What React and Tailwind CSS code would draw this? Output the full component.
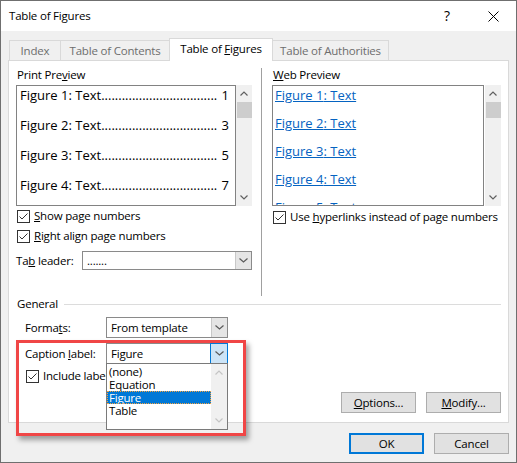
import React from 'react';

// flechita de los combos y scrollbars
function Chevron({ up, color = '#606060', w = 8, h = 5 }) {
  return (
    <svg width={w} height={h} viewBox={`0 0 ${w} ${h}`}>
      <path
        d={up ? `M0.5 ${h - 0.5} L${w / 2} 1 L${w - 0.5} ${h - 0.5}` : `M0.5 0.5 L${w / 2} ${h - 1} L${w - 0.5} 0.5`}
        fill="none"
        stroke={color}
        strokeWidth="1.2"
      />
    </svg>
  );
}

function Check({ children }) {
  return (
    <div className="flex items-center h-[16px]">
      <svg width="13" height="13" viewBox="0 0 13 13" className="shrink-0">
        <rect x="0.5" y="0.5" width="12" height="12" fill="#fff" stroke="#333" />
        <path d="M2.5 6.5 L5 9 L10.5 3.5" fill="none" stroke="#333" strokeWidth="1" />
      </svg>
      <span className="ml-[4px] leading-[16px] whitespace-nowrap">{children}</span>
    </div>
  );
}

function ScrollBar({ disabled }) {
  const c = disabled ? '#c4c4c4' : '#606060';
  return (
    <div className="w-[16px] h-full bg-[#f0f0f0] flex flex-col shrink-0">
      <div className="h-[17px] flex items-center justify-center">
        <Chevron up color={c} />
      </div>
      {!disabled && <div className="h-[16px] ml-[1px] bg-[#cdcdcd]" />}
      <div className="flex-1" />
      <div className="h-[17px] flex items-center justify-center">
        <Chevron color={c} />
      </div>
    </div>
  );
}

function Combo({ value, className, focused, children }) {
  return (
    <div className={`relative flex bg-white border border-[#8a8a8a] ${className}`}>
      <div className="flex-1 flex items-center pl-[4px] leading-none whitespace-nowrap">{value}</div>
      <div
        className={`w-[16px] flex items-center justify-center ${
          focused ? 'bg-[#cce4f7] outline outline-[#0078d7] -outline-offset-0' : 'bg-[#e5e5e5] border-l border-[#c8c8c8]'
        }`}
      >
        <Chevron w={9} h={5} color="#5a5a5a" />
      </div>
      {children}
    </div>
  );
}

function Button({ children, primary }) {
  return (
    <div
      className={`w-[75px] h-[21px] flex items-center justify-center bg-[#e1e1e1] ${
        primary ? 'border-2 border-[#0078d7]' : 'border border-[#adadad]'
      }`}
    >
      {children}
    </div>
  );
}

const printLines = ['1', '3', '5', '7'];
const dots = '.'.repeat(34);

export default function App() {
  return (
    <div className="w-[517px] h-[463px] relative border border-[#6f6f6f] bg-[#f0f0f0] flex flex-col text-black font-['Open_Sans',sans-serif] text-[11.5px] tracking-[-0.2px]">
      {/* barra de titulo */}
      <div className="h-[30px] bg-white flex items-center pl-[8px] shrink-0">
        <span className="flex-1">Table of Figures</span>
        <span className="w-[46px] text-center text-[14px] leading-none">?</span>
        <div className="w-[46px] flex justify-center">
          <svg width="11" height="11" viewBox="0 0 11 11">
            <path d="M0.5 0.5 L10.5 10.5 M10.5 0.5 L0.5 10.5" stroke="#000" strokeWidth="1" />
          </svg>
        </div>
      </div>

      {/* pestañas */}
      <div className="flex items-end h-[23px] mt-[7px] pl-[8px] shrink-0">
        <div className="h-[21px] w-[51px] border-t border-l border-[#d9d9d9] flex items-center justify-center text-[#6d6d6d]">Index</div>
        <div className="h-[21px] w-[109px] border-t border-l border-[#d9d9d9] flex items-center justify-center text-[#6d6d6d]">Table of Contents</div>
        <div className="relative z-10 h-[23px] w-[104px] bg-white border-t border-x border-[#d9d9d9] flex items-center justify-center pb-[2px]">
          <span>Table of <u>F</u>igures</span>
        </div>
        <div className="h-[21px] w-[116px] border-t border-r border-[#d9d9d9] flex items-center justify-center text-[#6d6d6d]">Table of Authorities</div>
      </div>

      {/* panel */}
      <div className="ml-[7px] -mt-px w-[501px] h-[363px] bg-white border border-[#d9d9d9] flex flex-col pl-[7px] pr-[7px] shrink-0">
        <div className="flex pt-[6px]">
          {/* columna izquierda */}
          <div className="w-[236px] flex flex-col">
            <div className="h-[16px] leading-[16px] pl-[1px]">
              Print Pre<u>v</u>iew
            </div>
            <div className="mt-[2px] flex h-[121px]">
              <div className="w-[220px] h-full border border-[#828282] overflow-hidden pl-[3px] pr-[6px] text-[13px] tracking-normal flex flex-col gap-[12px]">
                {printLines.map((n, i) => (
                  <div key={n} className="flex justify-between leading-[18px] whitespace-nowrap">
                    <span>
                      Figure {i + 1}: Text{dots}
                    </span>
                    <span>{n}</span>
                  </div>
                ))}
              </div>
              <ScrollBar />
            </div>
            <div className="mt-[2px] pl-[1px]">
              <Check>
                <u>S</u>how page numbers
              </Check>
            </div>
            <div className="mt-[4px] pl-[1px]">
              <Check>
                <u>R</u>ight align page numbers
              </Check>
            </div>
            <div className="mt-[7px] flex items-center">
              <span className="w-[66px]">
                Ta<u>b</u> leader:
              </span>
              <Combo value="......." className="w-[170px] h-[19px]" />
            </div>
          </div>

          <div className="ml-[9px] mt-[1px] w-px h-[228px] bg-[#a0a0a0]" />

          {/* columna derecha */}
          <div className="ml-[10px] w-[229px] flex flex-col">
            <div className="h-[16px] leading-[16px] pl-[1px]">
              <u>W</u>eb Preview
            </div>
            <div className="mt-[2px] flex h-[121px] gap-[1px]">
              <div className="w-[212px] h-full border border-[#828282] overflow-hidden pl-[2px] text-[13px] tracking-normal text-[#0563c1] flex flex-col gap-[10px]">
                {[1, 2, 3, 4, 5].map((n) => (
                  <div key={n} className="leading-[18px] underline whitespace-nowrap">
                    Figure {n}: Text
                  </div>
                ))}
              </div>
              <ScrollBar />
            </div>
            <div className="mt-[3px] pl-[1px]">
              <Check>
                Use <u>h</u>yperlinks instead of page numbers
              </Check>
            </div>
          </div>
        </div>

        {/* General */}
        <div className="flex items-center h-[16px] pl-[1px]">
          <span>General</span>
          <div className="flex-1 h-px bg-[#dcdcdc] ml-[6px]" />
        </div>
        <div className="mt-[5px] flex items-center pl-[9px]">
          <span className="w-[81px]">
            Forma<u>t</u>s:
          </span>
          <Combo value="From template" className="w-[122px] h-[21px]" />
        </div>
        <div className="mt-[5px] flex items-center pl-[9px] relative z-20">
          <span className="w-[81px]">
            Caption <u>l</u>abel:
          </span>
          <Combo value="Figure" focused className="w-[122px] h-[21px]">
            {/* lista desplegada */}
            <div className="absolute -left-px top-[19px] w-[122px] h-[67px] bg-white border border-[#7a7a7a] flex">
              <div className="flex-1 flex flex-col pt-[1px]">
                <div className="h-[13px] leading-[13px] pl-[2px]">(none)</div>
                <div className="h-[13px] leading-[13px] pl-[2px]">Equation</div>
                <div className="h-[13px] leading-[13px] pl-[2px] bg-[#0078d7] text-white outline outline-dotted outline-[#f4a340] -outline-offset-1">Figure</div>
                <div className="h-[13px] leading-[13px] pl-[2px]">Table</div>
              </div>
              <ScrollBar disabled />
            </div>
          </Combo>
        </div>
        <div className="mt-[4px] pl-[10px]">
          <Check>Include label and number</Check>
        </div>
        <div className="mt-[8px] flex justify-end gap-[10px]">
          <Button>
            <span>
              <u>O</u>ptions...
            </span>
          </Button>
          <Button>
            <span>
              <u>M</u>odify...
            </span>
          </Button>
        </div>
      </div>

      {/* botones */}
      <div className="mt-[10px] flex justify-end gap-[10px] pr-[7px]">
        <Button primary>OK</Button>
        <Button>Cancel</Button>
      </div>

      {/* marco rojo de anotacion */}
      <div className="absolute left-[15px] top-[339px] w-[230px] h-[96px] border-[3px] border-[#f04646] shadow-[3px_4px_5px_rgba(0,0,0,0.35)] z-30 pointer-events-none" />
    </div>
  );
}
